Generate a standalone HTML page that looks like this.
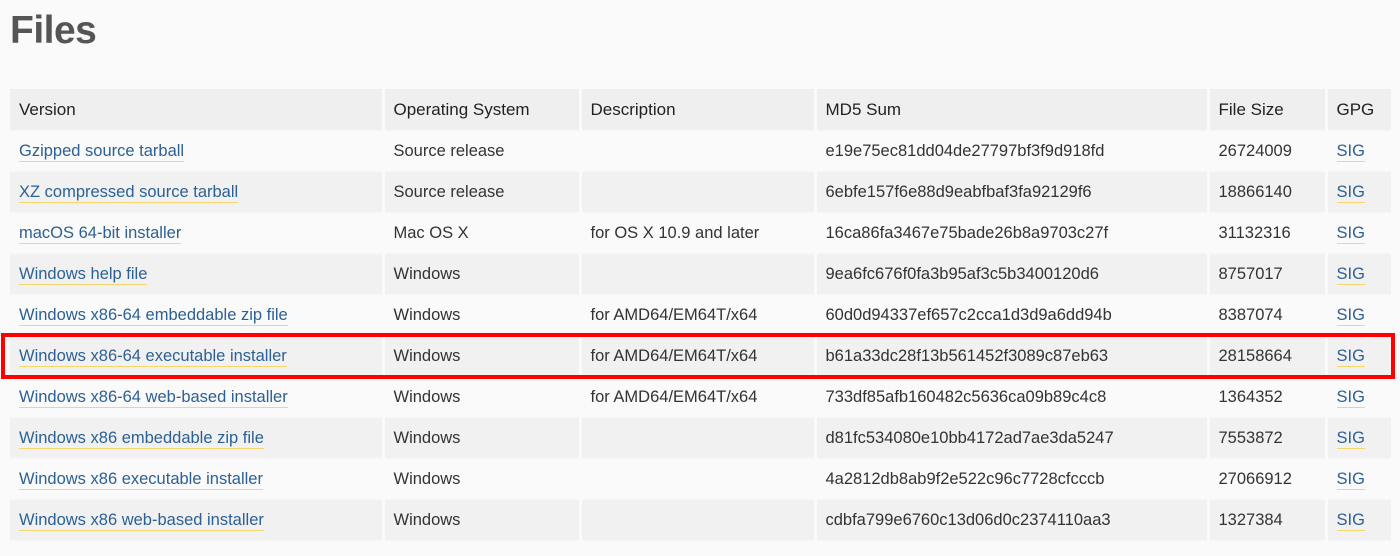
<!DOCTYPE html><html><head><style>
body{margin:0;background:#fafafa;width:1400px;height:556px;overflow:hidden;font-family:"Liberation Sans",sans-serif;color:#333;position:relative}
h1{position:absolute;left:10px;top:9px;margin:0;font-size:39px;font-weight:bold;color:#555;letter-spacing:-0.5px}
table{position:absolute;left:10px;top:89px;border-collapse:collapse;font-size:16.5px}
td,th{height:41px;padding:2px 0 0 9px;text-align:left;font-weight:normal;border-right:3px solid #fafafa;border-bottom:1px solid #f6f6f6;box-sizing:border-box}
th{background:#efefef;color:#222;font-size:17px}
tr:nth-child(odd) td{background:#f1f1f1}
a{color:#2c6096;text-decoration:none;border-bottom:1px solid #f5d76e;padding-bottom:1px}
.box{position:absolute;left:1px;top:333px;width:1386px;height:38px;border:4px solid #f00}
</style></head><body>
<h1>Files</h1>
<table>
<colgroup><col style="width:373px"><col style="width:197px"><col style="width:235px"><col style="width:393px"><col style="width:118px"><col style="width:66px"></colgroup>
<tr><th>Version</th><th>Operating System</th><th>Description</th><th>MD5 Sum</th><th>File Size</th><th>GPG</th></tr>
<tr><td><a>Gzipped source tarball</a></td><td>Source release</td><td></td><td>e19e75ec81dd04de27797bf3f9d918fd</td><td>26724009</td><td><a>SIG</a></td></tr>
<tr><td><a>XZ compressed source tarball</a></td><td>Source release</td><td></td><td>6ebfe157f6e88d9eabfbaf3fa92129f6</td><td>18866140</td><td><a>SIG</a></td></tr>
<tr><td><a>macOS 64-bit installer</a></td><td>Mac OS X</td><td>for OS X 10.9 and later</td><td>16ca86fa3467e75bade26b8a9703c27f</td><td>31132316</td><td><a>SIG</a></td></tr>
<tr><td><a>Windows help file</a></td><td>Windows</td><td></td><td>9ea6fc676f0fa3b95af3c5b3400120d6</td><td>8757017</td><td><a>SIG</a></td></tr>
<tr><td><a>Windows x86-64 embeddable zip file</a></td><td>Windows</td><td>for AMD64/EM64T/x64</td><td>60d0d94337ef657c2cca1d3d9a6dd94b</td><td>8387074</td><td><a>SIG</a></td></tr>
<tr><td><a>Windows x86-64 executable installer</a></td><td>Windows</td><td>for AMD64/EM64T/x64</td><td>b61a33dc28f13b561452f3089c87eb63</td><td>28158664</td><td><a>SIG</a></td></tr>
<tr><td><a>Windows x86-64 web-based installer</a></td><td>Windows</td><td>for AMD64/EM64T/x64</td><td>733df85afb160482c5636ca09b89c4c8</td><td>1364352</td><td><a>SIG</a></td></tr>
<tr><td><a>Windows x86 embeddable zip file</a></td><td>Windows</td><td></td><td>d81fc534080e10bb4172ad7ae3da5247</td><td>7553872</td><td><a>SIG</a></td></tr>
<tr><td><a>Windows x86 executable installer</a></td><td>Windows</td><td></td><td>4a2812db8ab9f2e522c96c7728cfcccb</td><td>27066912</td><td><a>SIG</a></td></tr>
<tr><td><a>Windows x86 web-based installer</a></td><td>Windows</td><td></td><td>cdbfa799e6760c13d06d0c2374110aa3</td><td>1327384</td><td><a>SIG</a></td></tr>
</table>
<div class="box"></div>
</body></html>
